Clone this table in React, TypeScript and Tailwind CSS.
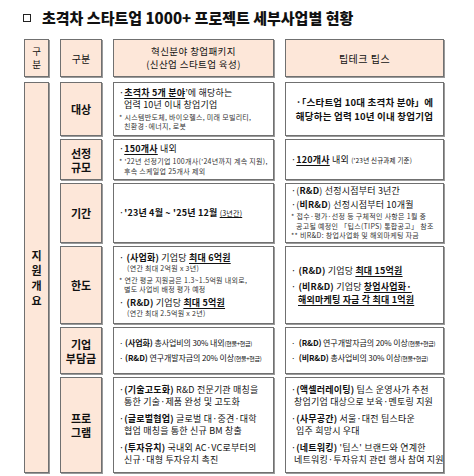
import React from 'react';

const box = 'border border-[#707070] shadow-[1px_1px_0_#9a9a9a]';
const peach = `${box} bg-[#fde7d9] flex items-center justify-center text-center`;
const white = `${box} bg-white flex flex-col justify-center px-[5px] overflow-hidden`;

const B = ({ children }: { children: React.ReactNode }) => <span className="font-bold">{children}</span>;
const U = ({ children }: { children: React.ReactNode }) => (
  <span className="font-bold underline decoration-[1px] underline-offset-2">{children}</span>
);

const Line = ({ children, className = '' }: { children: React.ReactNode; className?: string }) => (
  <p className={`whitespace-nowrap text-[9px] leading-[12px] tracking-[0.2px] ${className}`}>{children}</p>
);
const Note = ({ children, className = '' }: { children: React.ReactNode; className?: string }) => (
  <p className={`whitespace-nowrap text-[7px] leading-[9.5px] tracking-[0.3px] text-[#333] ${className}`}>{children}</p>
);
const Small = ({ children }: { children: React.ReactNode }) => (
  <span className="text-[6px] tracking-[-0.3px]">{children}</span>
);
const Share = ({ children, className = '' }: { children: React.ReactNode; className?: string }) => (
  <p className={`whitespace-nowrap text-[8px] leading-[13px] tracking-[-0.1px] ${className}`}>{children}</p>
);

export default function App() {
  return (
    <div className="w-[474px] h-[476px] bg-white text-[#111] font-['Noto_Sans_CJK_KR','Noto_Sans',sans-serif] pt-[9px]">
      <div className="flex items-center pl-[23px] h-[18px]">
        <span className="w-[8px] h-[8px] border border-[#222] mr-[11px]" />
        <h1 className="text-[15px] font-black">초격차 스타트업 1000+ 프로젝트 세부사업별 현황</h1>
      </div>

      <div className="mt-[12px] ml-[24px] grid grid-cols-[25px_42px_161px_159px] grid-rows-[40px_54px_41px_60px_78px_47px_96px] gap-x-[11px] gap-y-[3px]">
        {/* header */}
        <div className={`${peach} h-[38px] flex-col text-[9.5px] leading-[13px]`}><span>구</span><span>분</span></div>
        <div className={`${peach} h-[38px] text-[10px]`}>구분</div>
        <div className={`${peach} h-[38px] flex-col text-[9.5px] leading-[13px] tracking-[0.4px]`}>
          <span>혁신분야 창업패키지</span><span>(신산업 스타트업 육성)</span>
        </div>
        <div className={`${peach} h-[38px] text-[10px] tracking-[0.5px]`}>팁테크 팁스</div>

        {/* left span */}
        <div className={`${peach} row-span-6 flex-col text-[11px] font-bold leading-[15px]`}>
          <span>지</span><span>원</span><span>개</span><span>요</span>
        </div>

        {/* 대상 */}
        <div className={`${peach} text-[11px] font-bold`}>대상</div>
        <div className={white}>
          <Line>·<U>초격차 5개 분야</U>’에 해당하는</Line>
          <Line className="pl-[5px]">업력 10년 이내 창업기업</Line>
          <Note className="mt-[2px]">* 시스템반도체, 바이오헬스, 미래 모빌리티,</Note>
          <Note className="pl-[5px]">친환경·에너지, 로봇</Note>
        </div>
        <div className={`${white} items-center text-center`}>
          <p className="text-[9.5px] leading-[14px] font-bold tracking-[0.2px] whitespace-nowrap">
            ·「스타트업 10대 초격차 분야」에<br />해당하는 업력 10년 이내 창업기업
          </p>
        </div>

        {/* 선정규모 */}
        <div className={`${peach} flex-col text-[11px] font-bold leading-[14px]`}><span>선정</span><span>규모</span></div>
        <div className={white}>
          <Line>·<U>150개사</U> 내외</Line>
          <Note className="mt-[2px]">* '22년 선정기업 100개사('24년까지 계속 지원),</Note>
          <Note className="pl-[5px]">후속 스케일업 25개사 제외</Note>
        </div>
        <div className={white}>
          <Line>·<U>120개사</U> 내외 <span className="text-[6.5px]">('23년 신규과제 기준)</span></Line>
        </div>

        {/* 기간 */}
        <div className={`${peach} text-[11px] font-bold`}>기간</div>
        <div className={white}>
          <Line>·<B>'23년 4월 ~ '25년 12월</B> <span className="text-[7px] underline">(3년간)</span></Line>
        </div>
        <div className={white}>
          <Line className="text-[9.5px]">·(<B>R&amp;D</B>) 선정시점부터 3년간</Line>
          <Line className="mt-[2px] text-[9.5px]">·(<B>비R&amp;D</B>) 선정시점부터 10개월</Line>
          <Note className="mt-[1px]">* 접수·평가·선정 등 구체적인 사항은 1월 중</Note>
          <Note className="pl-[5px]">공고될 예정인 「팁스(TIPS) 통합공고」 참조</Note>
          <Note>** 비R&amp;D: 창업사업화 및 해외마케팅 자금</Note>
        </div>

        {/* 한도 */}
        <div className={`${peach} text-[11px] font-bold`}>한도</div>
        <div className={white}>
          <Line className="text-[9.5px]">· <B>(사업화)</B> 기업당 <U>최대 6억원</U></Line>
          <Note className="pl-[8px]">(연간 최대 2억원 x 3년)</Note>
          <Note className="mt-[2px]">* 연간 평균 지원금은 1.3~1.5억원 내외로,</Note>
          <Note className="pl-[5px]">별도 사업비 배정 평가 예정</Note>
          <Line className="mt-[2px] text-[9.5px]">· <B>(R&amp;D)</B> 기업당 <U>최대 5억원</U></Line>
          <Note className="pl-[8px]">(연간 최대 2.5억원 x 2년)</Note>
        </div>
        <div className={white}>
          <Line>· <B>(R&amp;D)</B> 기업당 <U>최대 15억원</U></Line>
          <Line className="mt-[4px]">· <B>(비R&amp;D)</B> 기업당 <U>창업사업화·</U></Line>
          <Line className="mt-[1px] pl-[7px]"><U>해외마케팅 자금 각 최대 1억원</U></Line>
        </div>

        {/* 기업부담금 */}
        <div className={`${peach} flex-col text-[11px] font-bold leading-[14px]`}><span>기업</span><span>부담금</span></div>
        <div className={`${white} px-[4px]`}>
          <Share>· <B>(사업화)</B> 총사업비의 30% 내외<Small>(현물+현금)</Small></Share>
          <Share className="mt-[1px]">· <B>(R&amp;D)</B> 연구개발자금의 20% 이상<Small>(현물+현금)</Small></Share>
        </div>
        <div className={`${white} px-[4px]`}>
          <Share>· &nbsp;<B>(R&amp;D)</B> 연구개발자금의 20% 이상<Small>(현물+현금)</Small></Share>
          <Share className="mt-[1px]">· &nbsp;<B>(비R&amp;D)</B> 총사업비의 30% 이상<Small>(현물+현금)</Small></Share>
        </div>

        {/* 프로그램 */}
        <div className={`${peach} flex-col text-[11px] font-bold leading-[14px]`}><span>프로</span><span>그램</span></div>
        <div className={`${white} gap-[5px]`}>
          <div>
            <Line>·<B>(기술고도화)</B> R&amp;D 전문기관 매칭을</Line>
            <Line className="pl-[5px]">통한 기술·제품 완성 및 고도화</Line>
          </div>
          <div>
            <Line>·<B>(글로벌협업)</B> 글로벌 대·중견·대학</Line>
            <Line className="pl-[5px]">협업 매칭을 통한 신규 BM 창출</Line>
          </div>
          <div>
            <Line>·<B>(투자유치)</B> 국내외 AC·VC로부터의</Line>
            <Line className="pl-[5px]">신규·대형 투자유치 촉진</Line>
          </div>
        </div>
        <div className={`${white} gap-[5px]`}>
          <div>
            <Line>·<B>(액셀러레이팅)</B> 팁스 운영사가 추천</Line>
            <Line className="pl-[3px]">창업기업 대상으로 보육·멘토링 지원</Line>
          </div>
          <div>
            <Line>·<B>(사무공간)</B> 서울·대전 팁스타운</Line>
            <Line className="pl-[5px]">입주 희망시 우대</Line>
          </div>
          <div>
            <Line>·<B>(네트워킹)</B> '팁스' 브랜드와 연계한</Line>
            <Line className="pl-[3px]">네트워킹·투자유치 관련 행사 참여 지원</Line>
          </div>
        </div>
      </div>
    </div>
  );
}
